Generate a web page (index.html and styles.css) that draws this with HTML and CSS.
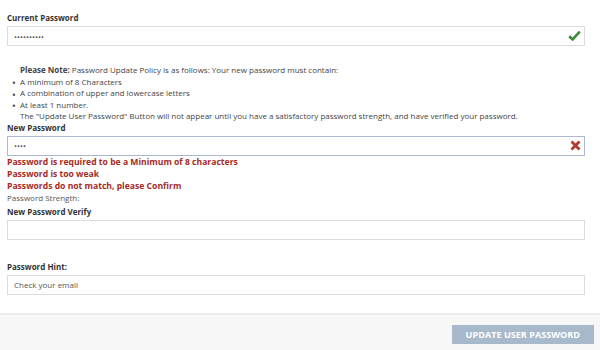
FILE: index.html
```html
<!DOCTYPE html>
<html lang="en">
<head>
    <meta charset="UTF-8">
    <meta name="viewport" content="width=device-width, initial-scale=1.0">
    <title>Change Password</title>
    <link rel="stylesheet" href="styles.css">
</head>
<body>
    <form class="password-form">
        <div class="content">
            <div class="form-group">
                <label for="current">Current Password</label>
                <div class="field">
                    <input type="password" id="current" value="1234567890">
                    <span class="icon valid">
                        <svg width="13" height="11" viewBox="0 0 13 11"><path d="M1.2 6.2 L4.6 9.4 L11.8 1.6" fill="none" stroke="#3d8b37" stroke-width="2.6" stroke-linejoin="miter"/></svg>
                    </span>
                </div>
            </div>

            <div class="policy">
                <p><strong>Please Note:</strong> Password Update Policy is as follows: Your new password must contain:</p>
                <ul>
                    <li>A minimum of 8 Characters</li>
                    <li>A combination of upper and lowercase letters</li>
                    <li>At least 1 number.</li>
                </ul>
                <p>The "Update User Password" Button will not appear until you have a satisfactory password strength, and have verified your password.</p>
            </div>

            <div class="form-group">
                <label for="newpass">New Password</label>
                <div class="field">
                    <input type="password" id="newpass" class="focused" value="1234">
                    <span class="icon invalid">
                        <svg width="11" height="11" viewBox="0 0 11 11"><path d="M1.5 1.5 L9.5 9.5 M9.5 1.5 L1.5 9.5" fill="none" stroke="#b5382d" stroke-width="2.8"/></svg>
                    </span>
                </div>
                <div class="errors">
                    <div>Password is required to be a Minimum of 8 characters</div>
                    <div>Password is too weak</div>
                    <div>Passwords do not match, please Confirm</div>
                </div>
                <div class="strength">Password Strength:</div>
            </div>

            <div class="form-group">
                <label for="verify">New Password Verify</label>
                <div class="field">
                    <input type="password" id="verify">
                </div>
            </div>

            <div class="form-group hint">
                <label for="hint">Password Hint:</label>
                <div class="field">
                    <input type="text" id="hint" value="Check your email">
                </div>
            </div>
        </div>

        <div class="footer">
            <button type="submit" disabled>Update User Password</button>
        </div>
    </form>
</body>
</html>
```

FILE: styles.css
```css
body {
    margin: 0;
    font-family: "Open Sans", Arial, sans-serif;
    color: #333;
    background: #fff;
}
.content {
    padding: 12px 15px 18px 7px;
}
.form-group label {
    display: block;
    font-size: 8px;
    font-weight: bold;
    line-height: 11px;
    margin-bottom: 3px;
}
.field {
    position: relative;
}
.field input {
    display: block;
    box-sizing: border-box;
    width: 100%;
    height: 20px;
    padding: 0 6px;
    border: 1px solid #dcdcdc;
    font-family: "Open Sans", Arial, sans-serif;
    font-size: 8px;
    color: #555;
    outline: none;
}
.field input.focused {
    border-color: #a9b9d4;
}
.icon {
    position: absolute;
    right: 4px;
    top: 4px;
    line-height: 0;
}
.policy {
    font-size: 8px;
    line-height: 11.5px;
    color: #444;
    margin: 18px 0 0 13px;
}
.policy p {
    margin: 0;
}
.policy ul {
    margin: 0 0 0 -8px;
    padding: 0;
    list-style: none;
}
.policy li::before {
    content: "•";
    display: inline-block;
    width: 8px;
    font-size: 10px;
    line-height: 8px;
    vertical-align: -2.5px;
}
.errors {
    color: #a52a24;
    font-weight: bold;
    font-size: 8.6px;
    line-height: 12px;
}
.strength {
    font-size: 8px;
    line-height: 12px;
    color: #555;
    margin-bottom: 2px;
}
.hint {
    margin-top: 21px;
}
.footer {
    border-top: 2px solid #ececec;
    background: #f7f7f7;
    padding: 10px 6px 10px 0;
    display: flex;
    justify-content: flex-end;
}
.footer button {
    background: #a8b9cb;
    color: #fff;
    border: none;
    height: 19px;
    padding: 0 14px;
    font-family: "Open Sans", Arial, sans-serif;
    font-weight: bold;
    font-size: 9.1px;
    text-transform: uppercase;
}
```
